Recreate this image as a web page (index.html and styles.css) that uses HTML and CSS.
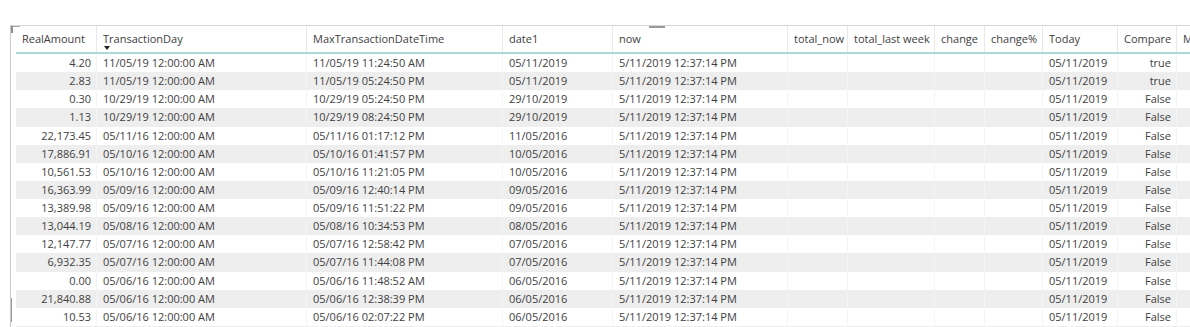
FILE: index.html
```html
<!DOCTYPE html>
<html>
<head>
<meta charset="utf-8">
<link rel="stylesheet" href="styles.css">
</head>
<body>
<div class="frame">
  <div class="grid">
    <div class="row head">
      <div class="c c1">RealAmount</div>
      <div class="c c2">TransactionDay<span class="sort"></span></div>
      <div class="c c3">MaxTransactionDateTime</div>
      <div class="c c4">date1</div>
      <div class="c c5">now</div>
      <div class="c c6">total_now</div>
      <div class="c c7">total_last week</div>
      <div class="c c8">change</div>
      <div class="c c9">change%</div>
      <div class="c c10">Today</div>
      <div class="c c11">Compare</div>
      <div class="c c12">M</div>
    </div>
    <div class="row"><div class="c c1 r">4.20</div><div class="c c2">11/05/19 12:00:00 AM</div><div class="c c3">11/05/19 11:24:50 AM</div><div class="c c4">05/11/2019</div><div class="c c5">5/11/2019 12:37:14 PM</div><div class="c c6"></div><div class="c c7"></div><div class="c c8"></div><div class="c c9"></div><div class="c c10">05/11/2019</div><div class="c c11 r">true</div><div class="c c12"></div></div>
    <div class="row"><div class="c c1 r">2.83</div><div class="c c2">11/05/19 12:00:00 AM</div><div class="c c3">11/05/19 05:24:50 PM</div><div class="c c4">05/11/2019</div><div class="c c5">5/11/2019 12:37:14 PM</div><div class="c c6"></div><div class="c c7"></div><div class="c c8"></div><div class="c c9"></div><div class="c c10">05/11/2019</div><div class="c c11 r">true</div><div class="c c12"></div></div>
    <div class="row"><div class="c c1 r">0.30</div><div class="c c2">10/29/19 12:00:00 AM</div><div class="c c3">10/29/19 05:24:50 PM</div><div class="c c4">29/10/2019</div><div class="c c5">5/11/2019 12:37:14 PM</div><div class="c c6"></div><div class="c c7"></div><div class="c c8"></div><div class="c c9"></div><div class="c c10">05/11/2019</div><div class="c c11 r">False</div><div class="c c12"></div></div>
    <div class="row"><div class="c c1 r">1.13</div><div class="c c2">10/29/19 12:00:00 AM</div><div class="c c3">10/29/19 08:24:50 PM</div><div class="c c4">29/10/2019</div><div class="c c5">5/11/2019 12:37:14 PM</div><div class="c c6"></div><div class="c c7"></div><div class="c c8"></div><div class="c c9"></div><div class="c c10">05/11/2019</div><div class="c c11 r">False</div><div class="c c12"></div></div>
    <div class="row"><div class="c c1 r">22,173.45</div><div class="c c2">05/11/16 12:00:00 AM</div><div class="c c3">05/11/16 01:17:12 PM</div><div class="c c4">11/05/2016</div><div class="c c5">5/11/2019 12:37:14 PM</div><div class="c c6"></div><div class="c c7"></div><div class="c c8"></div><div class="c c9"></div><div class="c c10">05/11/2019</div><div class="c c11 r">False</div><div class="c c12"></div></div>
    <div class="row"><div class="c c1 r">17,886.91</div><div class="c c2">05/10/16 12:00:00 AM</div><div class="c c3">05/10/16 01:41:57 PM</div><div class="c c4">10/05/2016</div><div class="c c5">5/11/2019 12:37:14 PM</div><div class="c c6"></div><div class="c c7"></div><div class="c c8"></div><div class="c c9"></div><div class="c c10">05/11/2019</div><div class="c c11 r">False</div><div class="c c12"></div></div>
    <div class="row"><div class="c c1 r">10,561.53</div><div class="c c2">05/10/16 12:00:00 AM</div><div class="c c3">05/10/16 11:21:05 PM</div><div class="c c4">10/05/2016</div><div class="c c5">5/11/2019 12:37:14 PM</div><div class="c c6"></div><div class="c c7"></div><div class="c c8"></div><div class="c c9"></div><div class="c c10">05/11/2019</div><div class="c c11 r">False</div><div class="c c12"></div></div>
    <div class="row"><div class="c c1 r">16,363.99</div><div class="c c2">05/09/16 12:00:00 AM</div><div class="c c3">05/09/16 12:40:14 PM</div><div class="c c4">09/05/2016</div><div class="c c5">5/11/2019 12:37:14 PM</div><div class="c c6"></div><div class="c c7"></div><div class="c c8"></div><div class="c c9"></div><div class="c c10">05/11/2019</div><div class="c c11 r">False</div><div class="c c12"></div></div>
    <div class="row"><div class="c c1 r">13,389.98</div><div class="c c2">05/09/16 12:00:00 AM</div><div class="c c3">05/09/16 11:51:22 PM</div><div class="c c4">09/05/2016</div><div class="c c5">5/11/2019 12:37:14 PM</div><div class="c c6"></div><div class="c c7"></div><div class="c c8"></div><div class="c c9"></div><div class="c c10">05/11/2019</div><div class="c c11 r">False</div><div class="c c12"></div></div>
    <div class="row"><div class="c c1 r">13,044.19</div><div class="c c2">05/08/16 12:00:00 AM</div><div class="c c3">05/08/16 10:34:53 PM</div><div class="c c4">08/05/2016</div><div class="c c5">5/11/2019 12:37:14 PM</div><div class="c c6"></div><div class="c c7"></div><div class="c c8"></div><div class="c c9"></div><div class="c c10">05/11/2019</div><div class="c c11 r">False</div><div class="c c12"></div></div>
    <div class="row"><div class="c c1 r">12,147.77</div><div class="c c2">05/07/16 12:00:00 AM</div><div class="c c3">05/07/16 12:58:42 PM</div><div class="c c4">07/05/2016</div><div class="c c5">5/11/2019 12:37:14 PM</div><div class="c c6"></div><div class="c c7"></div><div class="c c8"></div><div class="c c9"></div><div class="c c10">05/11/2019</div><div class="c c11 r">False</div><div class="c c12"></div></div>
    <div class="row"><div class="c c1 r">6,932.35</div><div class="c c2">05/07/16 12:00:00 AM</div><div class="c c3">05/07/16 11:44:08 PM</div><div class="c c4">07/05/2016</div><div class="c c5">5/11/2019 12:37:14 PM</div><div class="c c6"></div><div class="c c7"></div><div class="c c8"></div><div class="c c9"></div><div class="c c10">05/11/2019</div><div class="c c11 r">False</div><div class="c c12"></div></div>
    <div class="row"><div class="c c1 r">0.00</div><div class="c c2">05/06/16 12:00:00 AM</div><div class="c c3">05/06/16 11:48:52 AM</div><div class="c c4">06/05/2016</div><div class="c c5">5/11/2019 12:37:14 PM</div><div class="c c6"></div><div class="c c7"></div><div class="c c8"></div><div class="c c9"></div><div class="c c10">05/11/2019</div><div class="c c11 r">False</div><div class="c c12"></div></div>
    <div class="row"><div class="c c1 r">21,840.88</div><div class="c c2">05/06/16 12:00:00 AM</div><div class="c c3">05/06/16 12:38:39 PM</div><div class="c c4">06/05/2016</div><div class="c c5">5/11/2019 12:37:14 PM</div><div class="c c6"></div><div class="c c7"></div><div class="c c8"></div><div class="c c9"></div><div class="c c10">05/11/2019</div><div class="c c11 r">False</div><div class="c c12"></div></div>
    <div class="row"><div class="c c1 r">10.53</div><div class="c c2">05/06/16 12:00:00 AM</div><div class="c c3">05/06/16 02:07:22 PM</div><div class="c c4">06/05/2016</div><div class="c c5">5/11/2019 12:37:14 PM</div><div class="c c6"></div><div class="c c7"></div><div class="c c8"></div><div class="c c9"></div><div class="c c10">05/11/2019</div><div class="c c11 r">False</div><div class="c c12"></div></div>
    <div class="row"></div>
  </div>
  <span class="handle h-corner-h"></span>
  <span class="handle h-corner-v"></span>
  <span class="handle h-top"></span>
  <span class="handle h-left"></span>
</div>
</body>
</html>
```

FILE: styles.css
```css
html, body {
  margin: 0;
  padding: 0;
  background: #ffffff;
  overflow: hidden;
}
body {
  font-family: "Open Sans", "Noto Sans", sans-serif;
  font-size: 11px;
  color: #3e3e3e;
}
.frame {
  position: relative;
  margin: 25px 0 0 10px;
  border-top: 1px solid #d6d6d6;
  border-left: 1px solid #c9c9c9;
  padding-left: 5px;
  height: 310px;
  overflow: hidden;
}
.grid {
  display: flex;
  flex-direction: column;
}
.row {
  display: flex;
  height: 18.13px;
  line-height: 18.13px;
  flex: 0 0 auto;
  white-space: nowrap;
}
.row:nth-child(odd) {
  background: #eeeeee;
}
.row.head {
  background: #ffffff;
  height: 26px;
  line-height: 26px;
  border-bottom: 2px solid #a9dcd9;
  position: relative;
}
.c {
  flex: 0 0 auto;
  box-sizing: border-box;
  padding: 0 5px 0 6px;
  overflow: hidden;
  border-left: 1px solid #f4f4f4;
}
.row .c1 { border-left: none; }
.head .c {
  border-left: 1px solid #e9e9e9;
  position: relative;
}
.head .c1 { border-left: none; }
.r { text-align: right; }
.c1 { width: 80px; }
.c2 { width: 210px; }
.c3 { width: 196px; }
.c4 { width: 110px; }
.c5 { width: 175px; }
.c6 { width: 60px; }
.c7 { width: 87px; }
.c8 { width: 50px; }
.c9 { width: 58px; }
.c10 { width: 75px; }
.c11 { width: 59px; }
.c12 { width: 60px; }
.sort {
  position: absolute;
  left: 7px;
  top: 20px;
  width: 0;
  height: 0;
  border-left: 3px solid transparent;
  border-right: 3px solid transparent;
  border-top: 4px solid #222222;
}
.handle {
  position: absolute;
  background: #9a9a9a;
}
.h-corner-h {
  left: -4px;
  top: -2px;
  width: 13px;
  height: 3px;
  background: #a8a8a8;
}
.h-corner-v {
  left: -4px;
  top: -2px;
  width: 6px;
  height: 9px;
  background: #8f8f8f;
}
.h-top {
  left: 638px;
  top: -2px;
  width: 16px;
  height: 4px;
}
.h-left {
  left: -4px;
  top: 272px;
  width: 5px;
  height: 24px;
}
```
